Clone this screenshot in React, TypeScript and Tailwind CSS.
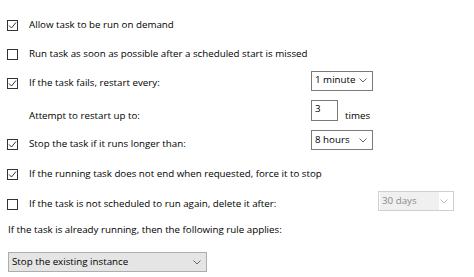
import React from 'react';

const font = { fontFamily: '"Open Sans", "Noto Sans", sans-serif' };

const Check: React.FC<{ checked?: boolean }> = ({ checked }) => (
    <span className="w-[11px] h-[11px] border border-[#333] bg-white flex items-center justify-center shrink-0">
        {checked && (
            <svg width="9" height="9" viewBox="0 0 9 9" fill="none">
                <path d="M1 4.5L3.5 7L8 1.5" stroke="#333" strokeWidth="1" />
            </svg>
        )}
    </span>
);

const Chevron: React.FC<{ color?: string }> = ({ color = '#555' }) => (
    <svg width="8" height="5" viewBox="0 0 8 5" fill="none">
        <path d="M0.5 0.5L4 4L7.5 0.5" stroke={color} strokeWidth="1" />
    </svg>
);

const Select: React.FC<{ label: string; width: string; disabled?: boolean; gray?: boolean }> = ({ label, width, disabled, gray }) => (
    <div
        className={`${width} h-[20px] flex items-center justify-between pl-[3px] pr-[5px] border whitespace-nowrap ${
            disabled ? 'border-[#cfcfcf] text-[#8a8a8a] bg-white' : gray ? 'border-[#adadad] bg-[#e5e5e5] text-black' : 'border-[#7a7a7a] bg-white text-black'
        }`}
    >
        <span className={disabled ? 'bg-[#f0f0f0] h-full flex items-center pr-[22px] -ml-[2px] pl-[2px]' : ''}>{label}</span>
        <Chevron color={disabled ? '#bbb' : '#666'} />
    </div>
);

const Row: React.FC<{ h: string; checked?: boolean; box?: boolean; textClass?: string; children: React.ReactNode; right?: React.ReactNode }> = ({ h, checked, box = true, textClass = '', children, right }) => (
    <div className={`flex items-center ${h}`}>
        <div className="w-[304px] flex items-center gap-[11px] shrink-0 whitespace-nowrap">
            {box ? <Check checked={checked} /> : <span className="w-[11px] shrink-0" />}
            <span className={textClass}>{children}</span>
        </div>
        {right}
    </div>
);

export default function App() {
    return (
        <div className="w-[474px] h-[277px] bg-white text-[9.75px] text-black pl-[7px] pt-[11px] overflow-hidden" style={font}>
            <Row h="h-[29px]" checked>Allow task to be run on demand</Row>
            <Row h="h-[29px]">Run task as soon as possible after a scheduled start is missed</Row>
            <Row h="h-[29px]" checked right={<div className="mb-[6px]"><Select label="1 minute" width="w-[62px]" /></div>}>
                If the task fails, restart every:
            </Row>
            <Row h="h-[31px]" box={false} textClass="pt-[5px]" right={
                <div className="flex items-end gap-[7px] mb-[6px]">
                    <div className="w-[27px] h-[21px] border border-[#7a7a7a] pl-[3px] leading-[15px]">3</div>
                    <span className="leading-[13px] -mb-[1px]">times</span>
                </div>
            }>Attempt to restart up to:</Row>
            <Row h="h-[30px]" checked right={<div className="mb-[8px]"><Select label="8 hours" width="w-[62px]" /></div>}>
                Stop the task if it runs longer than:
            </Row>
            <Row h="h-[30px]" checked>If the running task does not end when requested, force it to stop</Row>
            <Row h="h-[30px]" right={<div className="ml-[67px] mb-[6px]"><Select label="30 days" width="w-[76px]" disabled /></div>}>
                If the task is not scheduled to run again, delete it after:
            </Row>
            <div className="h-[22px] flex items-center pl-[1px] whitespace-nowrap">If the task is already running, then the following rule applies:</div>
            <div className="pt-[11px] pl-[1px]">
                <Select label="Stop the existing instance" width="w-[199px]" gray />
            </div>
        </div>
    );
}
